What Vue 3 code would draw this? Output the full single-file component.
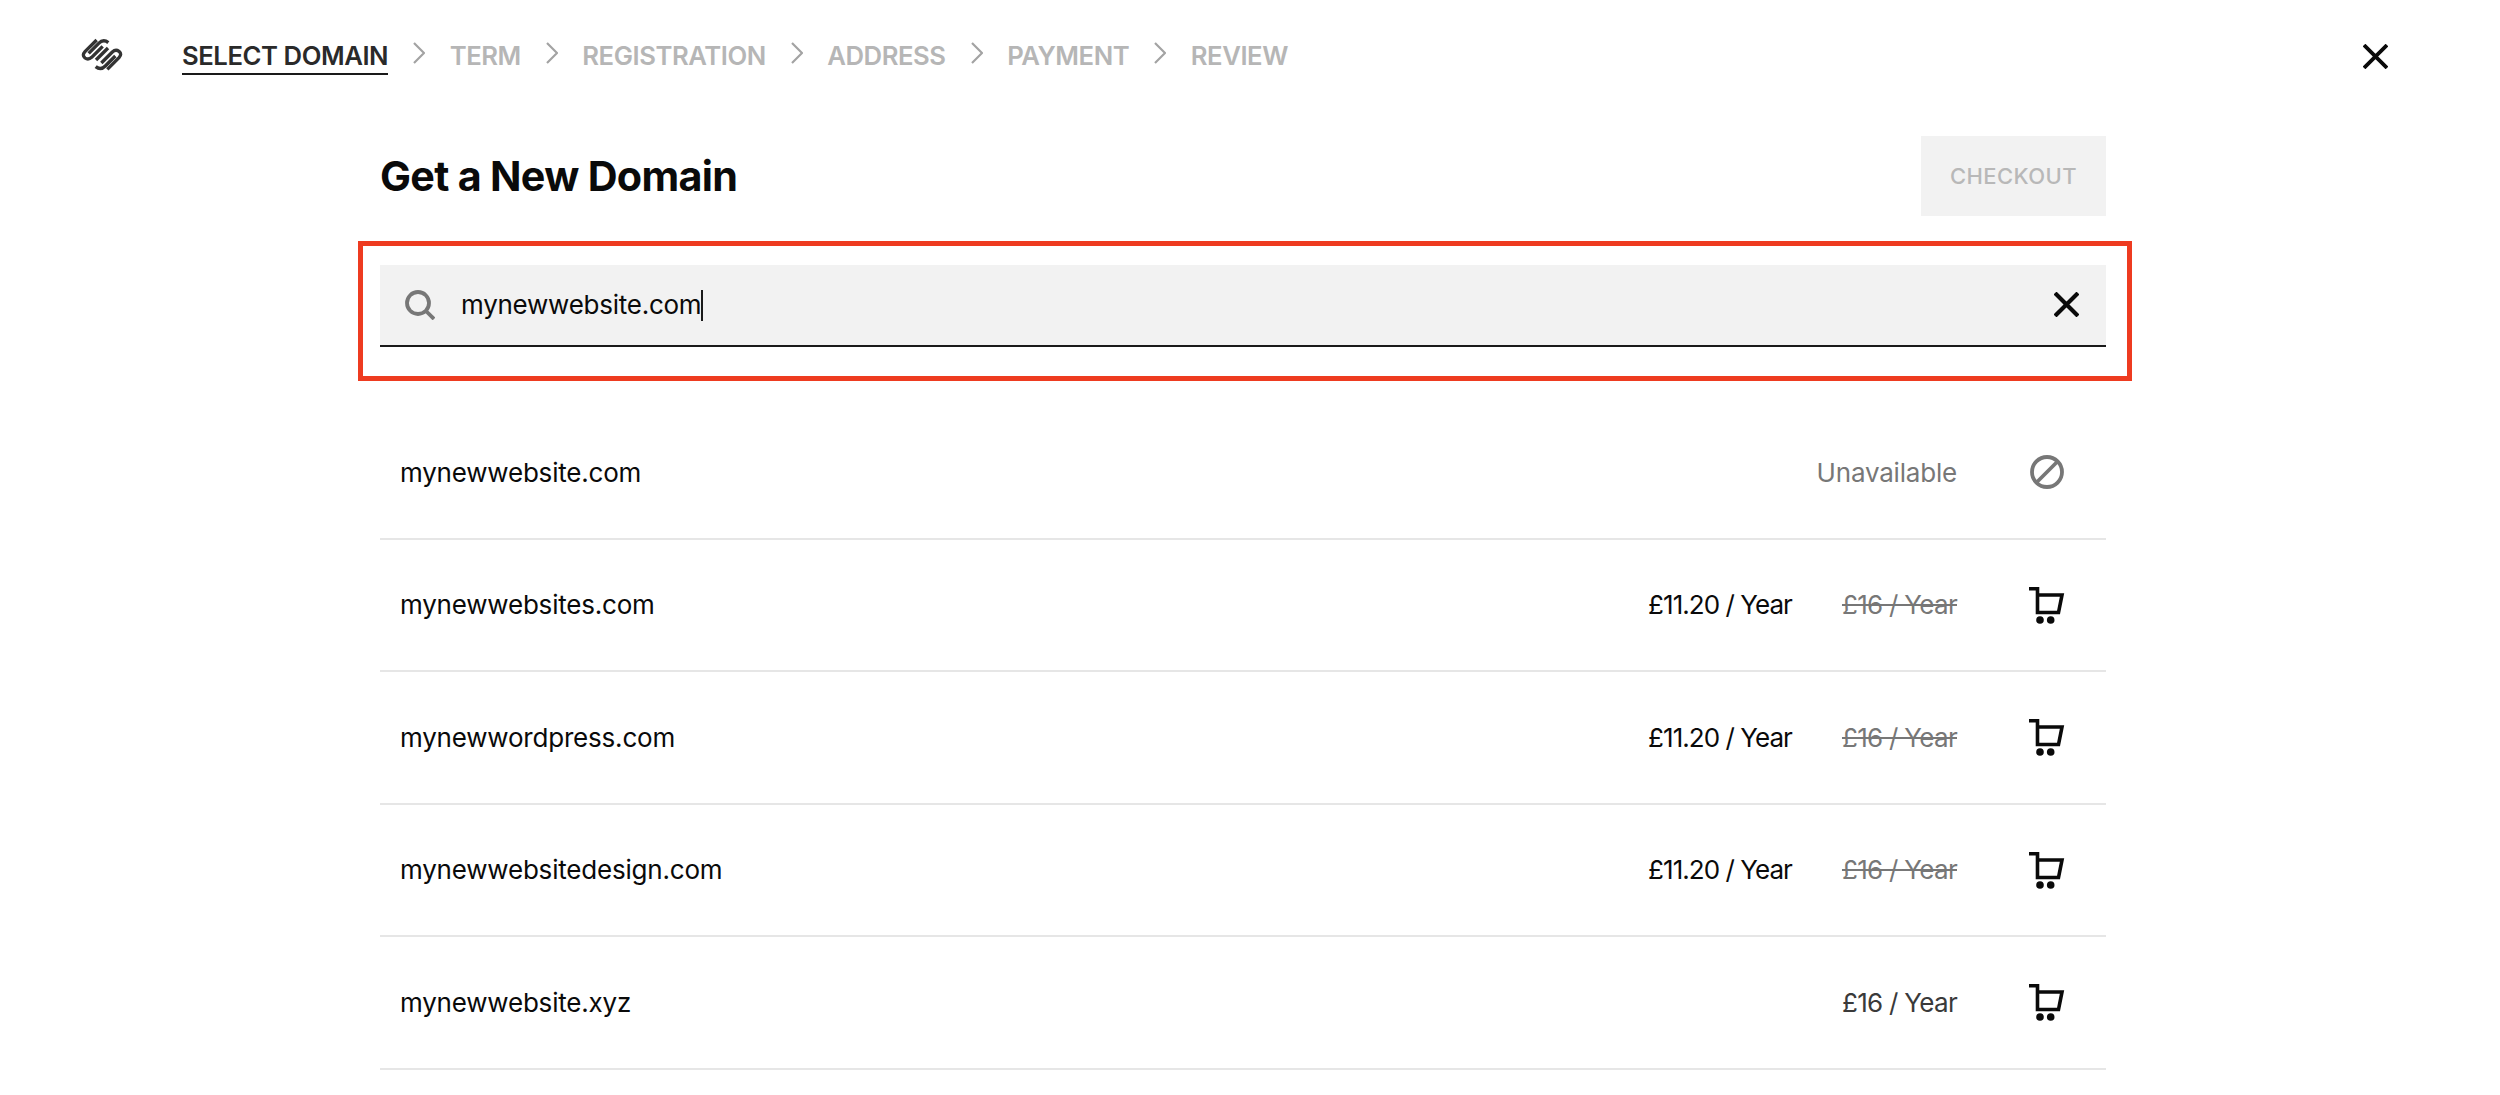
<script setup>
const steps = ['SELECT DOMAIN', 'TERM', 'REGISTRATION', 'ADDRESS', 'PAYMENT', 'REVIEW']
const rows = [
  { name: 'mynewwebsite.com', unavailable: true },
  { name: 'mynewwebsites.com', price: '£11.20 / Year', old: '£16 / Year' },
  { name: 'mynewwordpress.com', price: '£11.20 / Year', old: '£16 / Year' },
  { name: 'mynewwebsitedesign.com', price: '£11.20 / Year', old: '£16 / Year' },
  { name: 'mynewwebsite.xyz', plain: '£16 / Year' },
]
</script>

<template>
  <div class="page">
    <header class="topbar">
      <svg class="logo" viewBox="0 0 156 132" fill="none" stroke="#333" stroke-width="10">
        <path d="M62 18 27 53Q17 64 27 72 37 79 47 70L80 37" />
        <path d="M38 58 68 28Q82 14 97 26" />
        <path d="M60 78 96 42" />
        <path d="M94 106 129 71Q139 60 129 52 119 45 109 54L76 87" />
        <path d="M118 66 88 96Q74 110 59 98" />
      </svg>
      <nav class="steps">
        <template v-for="(s, i) in steps" :key="s">
          <svg v-if="i" class="chev" viewBox="0 0 12 22" fill="none" stroke="#a3a3a3" stroke-width="2.2"><path d="M1 1l10 10L1 21" /></svg>
          <span class="step" :class="{ active: i === 0 }">{{ s }}</span>
        </template>
      </nav>
      <svg class="close" viewBox="0 0 24 24" fill="none" stroke="#0a0a0a" stroke-width="3.6"><path d="M1 1l22 22M23 1 1 23" /></svg>
    </header>

    <main class="content">
      <div class="head">
        <h1>Get a New Domain</h1>
        <div class="checkout">CHECKOUT</div>
      </div>

      <div class="callout">
        <div class="search">
          <svg class="mag" viewBox="0 0 30 30" fill="none" stroke="#777" stroke-width="3.8"><circle cx="13" cy="13" r="11" /><path d="M21 21l8 8" /></svg>
          <span class="query">mynewwebsite.com</span><span class="caret"></span>
          <svg class="clear" viewBox="0 0 24 24" fill="none" stroke="#0a0a0a" stroke-width="4"><path d="M1 1l22 22M23 1 1 23" /></svg>
        </div>
      </div>

      <ul class="list">
        <li v-for="r in rows" :key="r.name" class="row">
          <span class="name">{{ r.name }}</span>
          <span class="prices">
            <span v-if="r.unavailable" class="muted">Unavailable</span>
            <template v-if="r.price">
              <span class="tighter">{{ r.price }}</span>
              <s class="muted tight">{{ r.old }}</s>
            </template>
            <span v-if="r.plain" class="dim tight">{{ r.plain }}</span>
          </span>
          <span class="act">
            <svg v-if="r.unavailable" class="ban" viewBox="0 0 34 34" fill="none" stroke="#777" stroke-width="3.800"><circle cx="17" cy="17" r="15" /><path d="M7 27 27 7" /></svg>
            <svg v-else class="cart" viewBox="0 0 36 38" fill="none">
              <path d="M0 1.800h8.500v23.700H29.500l3.500-17.500H8.500" stroke="#0a0a0a" stroke-width="3.600" />
              <circle cx="11" cy="33" r="3.800" fill="#0a0a0a" />
              <circle cx="21.700" cy="33" r="3.800" fill="#0a0a0a" />
            </svg>
          </span>
        </li>
      </ul>
    </main>
  </div>
</template>

<style>
html, body { margin: 0; background: #fff; }
</style>

<style scoped>
.page {
  width: 2500px;
  height: 1095px;
  overflow: hidden;
  background: #fff;
  font-family: Inter, "Liberation Sans", sans-serif;
  color: #0a0a0a;
  box-sizing: border-box;
}
.topbar {
  height: 110px;
  display: flex;
  align-items: flex-start;
  padding: 38px 0 0 76px;
  box-sizing: border-box;
  position: relative;
}
.logo { width: 52px; height: 44px; margin-top: -4px; flex: none; }
.steps {
  display: flex;
  align-items: center;
  margin-left: 54px;
  height: 36px;
}
.step {
  font-size: 25.700px;
  font-weight: 600;
  letter-spacing: -0.45px;
  line-height: 36px;
  color: #b6b6b6;
  white-space: nowrap;
}
.step.active {
  color: #2a2a2a;
  position: relative;
}
.step.active::after {
  content: "";
  position: absolute;
  left: 0;
  right: 0;
  bottom: -1px;
  height: 2px;
  background: #1a1a1a;
}
.chev { width: 12px; height: 22px; margin: 0 24.500px 0 25px; flex: none; position: relative; top: -3px; }
.close { position: absolute; left: 2363px; top: 44px; width: 25px; height: 25px; }
.content { width: 1726px; margin-left: 380px; }
.head {
  display: flex;
  align-items: center;
  justify-content: space-between;
  height: 80px;
  margin-top: 26px;
}
h1 {
  margin: 0;
  font-size: 41.300px;
  font-weight: 700;
  letter-spacing: -0.7px;
  color: #0a0a0a;
}
.checkout {
  width: 185px;
  height: 80px;
  background: #f2f2f2;
  display: flex;
  align-items: center;
  justify-content: center;
  color: #b8b8b8;
  font-size: 22px;
  font-weight: 500;
  letter-spacing: 0.4px;
}
.callout {
  margin: 25px -26px 0 -22px;
  border: 5px solid #ee3b20;
  padding: 19px 21px 29px 17px;
}
.search {
  height: 80px;
  background: #f2f2f2;
  border-bottom: 2px solid #1a1a1a;
  display: flex;
  align-items: center;
  padding-left: 25px;
  position: relative;
}
.mag { width: 30px; height: 30px; flex: none; margin-right: 26px; }
.query { font-size: 26px; letter-spacing: -0.25px; line-height: 32px; }
.caret { width: 2px; height: 31px; background: #1a1a1a; }
.clear { position: absolute; right: 27px; top: 27px; width: 25px; height: 25px; }
.list { list-style: none; margin: 26px 0 0; padding: 0; }
.row {
  height: 132.500px;
  box-sizing: border-box;
  border-bottom: 2px solid #e6e6e6;
  display: flex;
  align-items: center;
  font-size: 26px;
  letter-spacing: -0.2px;
  padding-left: 20px;
}
.name { flex: 1; }
.prices { display: flex; gap: 50px; align-items: center; }
.tight { letter-spacing: -0.7px; }
.tighter { letter-spacing: -0.95px; }
.muted { color: #777; }
.dim { color: #3a3a3a; }
.act { width: 149px; display: flex; padding-left: 72px; box-sizing: border-box; }
.ban { width: 34px; height: 34px; margin-left: 1px; }
.cart { width: 36px; height: 38px; margin-top: 2px; }
</style>
